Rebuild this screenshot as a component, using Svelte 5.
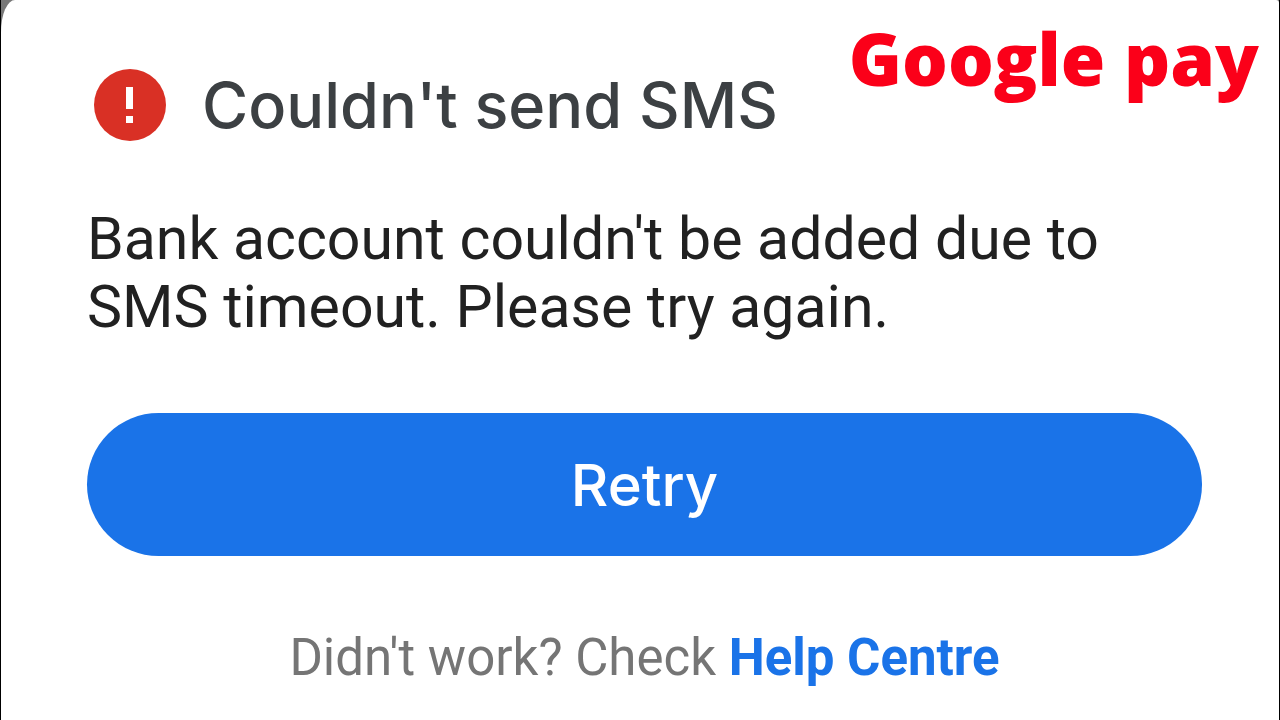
<script lang="ts">
  let title = "Couldn't send SMS";
  let message = "Bank account couldn't be added due to SMS timeout. Please try again.";
</script>

<div class="screen">
  <main class="sheet">
    <p class="brand">Google pay</p>

    <header>
      <svg class="icon" viewBox="0 0 72 72" aria-hidden="true">
        <circle cx="36" cy="36" r="36" fill="#d93025"/>
        <path d="M32 18h7v22h-7zM32 47h7v7h-7z" fill="#fff"/>
      </svg>
      <h1>{title}</h1>
    </header>

    <p class="message">{message}</p>

    <button type="button">Retry</button>

    <p class="help">Didn't work? Check <a href="#help">Help Centre</a></p>
  </main>
</div>

<style>
  .screen {
    border: solid #000;
    border-width: 0 1px;
    background: #777;
  }

  .sheet {
    position: relative;
    box-sizing: border-box;
    min-height: 100vh;
    padding: 63px 77px 30px 86px;
    border-radius: 14px 3px 0 0 / 32px 3px 0 0;
    background: #fff;
    font-family: Roboto, sans-serif;
  }

  p, h1 {
    margin: 0;
  }

  .brand {
    position: absolute;
    top: 14px;
    right: 20px;
    color: #fb0019;
    font: 800 72px/88px "Open Sans", sans-serif;
  }

  header {
    display: flex;
    align-items: center;
    gap: 36px;
    padding-left: 7px;
  }

  .icon {
    width: 72px;
    height: 72px;
  }

  h1 {
    color: #3c4043;
    font: 500 63px/84px Inter, sans-serif;
  }

  .message {
    margin-top: 58px;
    color: #212121;
    font-size: 59px;
    line-height: 68px;
  }

  button {
    display: block;
    width: 100%;
    height: 143px;
    margin-top: 72px;
    border: 0;
    border-radius: 72px;
    background: #1a73e8;
    color: #fff;
    font: 500 58px/72px Inter, sans-serif;
  }

  .help {
    margin-top: 72px;
    color: #757575;
    font-size: 51px;
    line-height: 60px;
    text-align: center;
  }

  a {
    color: #1a73e8;
    font-weight: bold;
    text-decoration: none;
  }
</style>
